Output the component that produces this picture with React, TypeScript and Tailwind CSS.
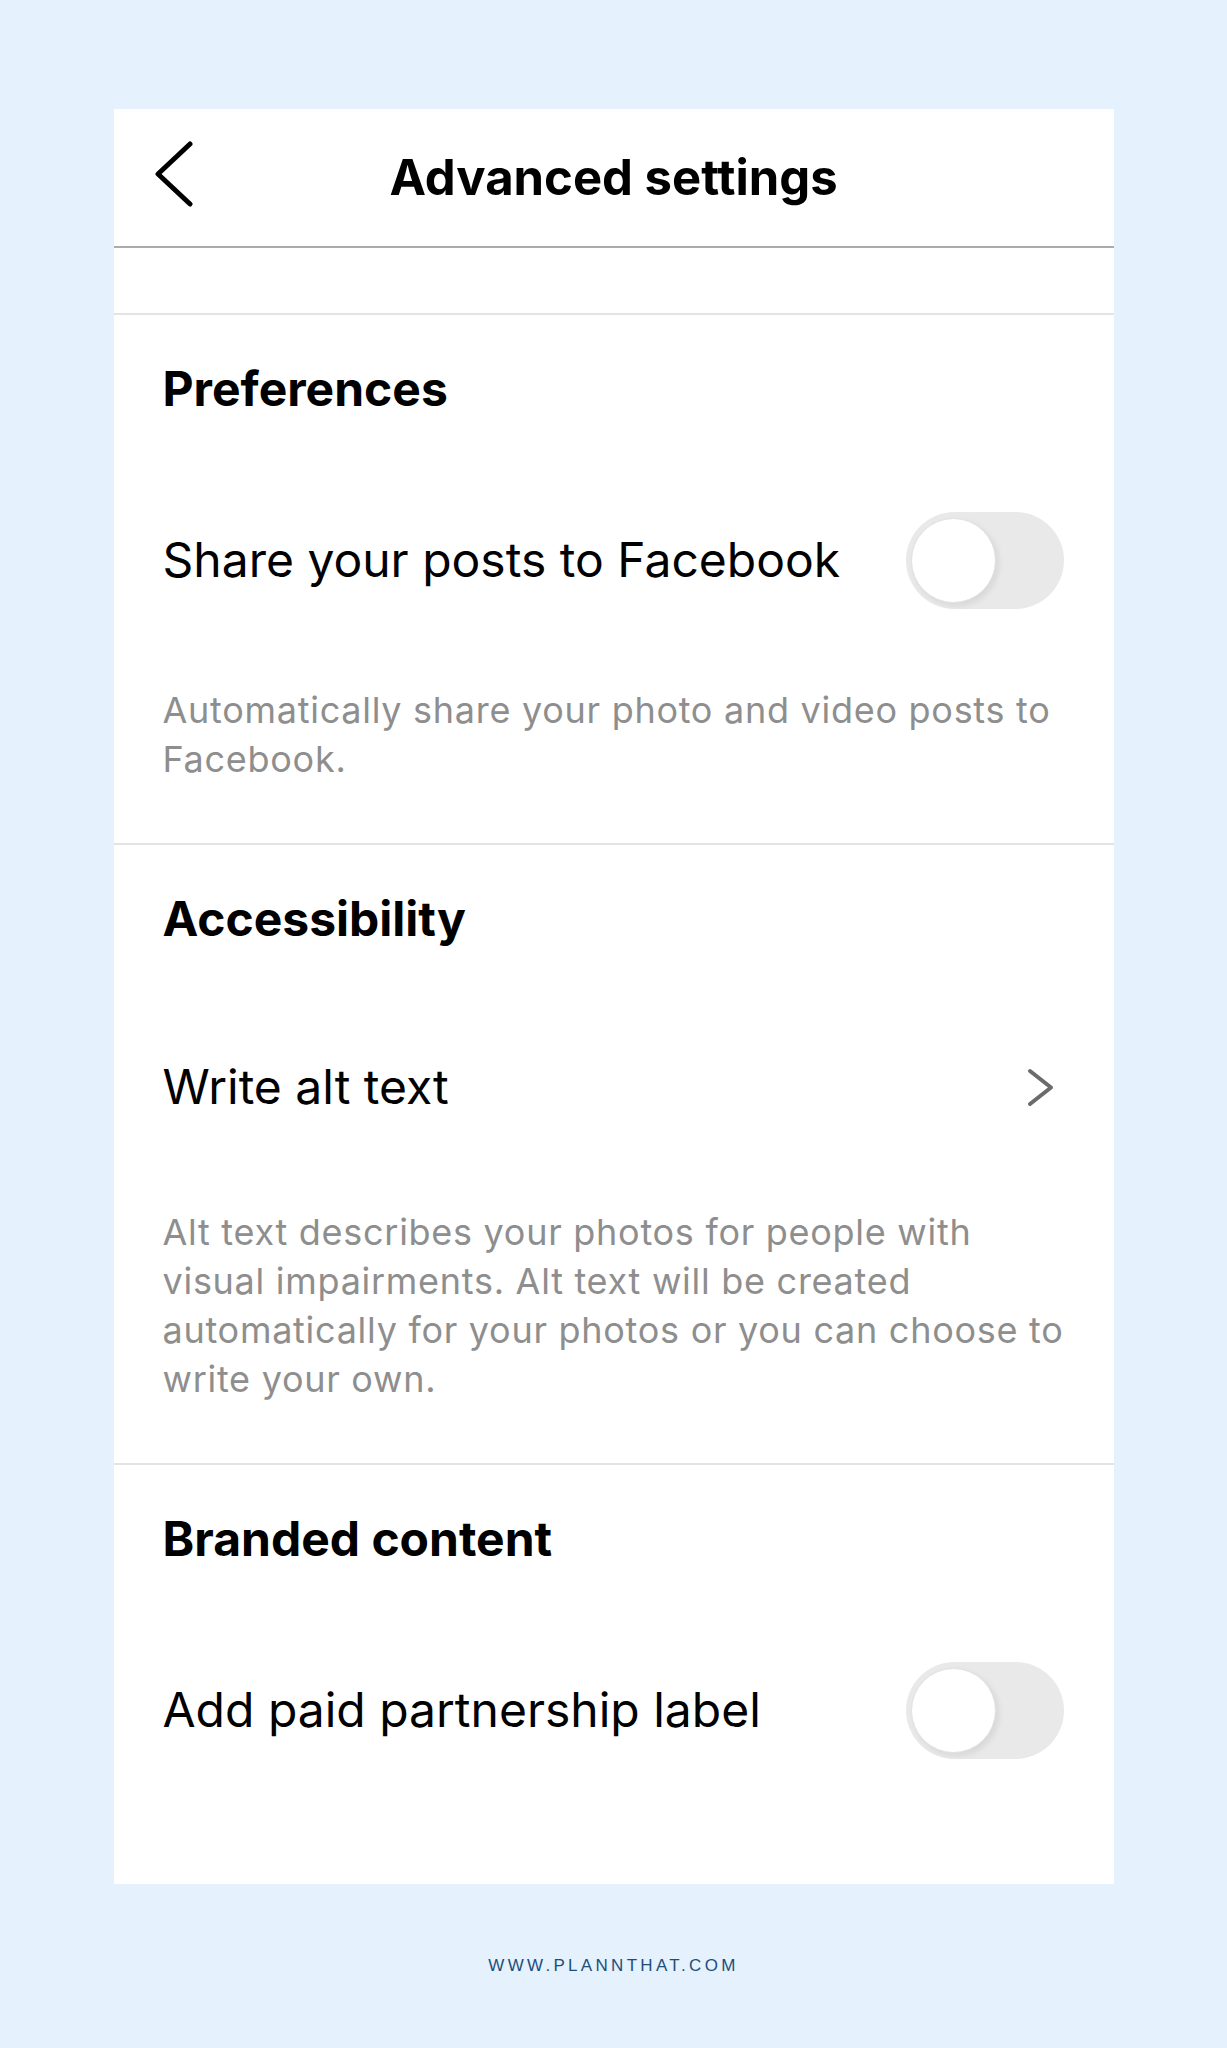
import React from 'react';

const font = { fontFamily: 'Inter, "Noto Sans", sans-serif' };

function Toggle() {
  return (
    <div className="flex h-[97px] w-[158px] shrink-0 items-center rounded-full bg-[#e9e9ea] px-[5px]">
      <div className="h-[85px] w-[85px] rounded-full border border-[#e2e2e2] bg-white shadow-[3px_3px_6px_rgba(0,0,0,0.08)]" />
    </div>
  );
}

function Chevron() {
  return (
    <svg width="30" height="40" viewBox="0 0 30 40" fill="none" className="shrink-0">
      <path d="M5 4 L26 20.5 L5 37" stroke="#6b6b6b" strokeWidth="4" strokeLinecap="round" strokeLinejoin="round" />
    </svg>
  );
}

function SectionTitle({ children }: { children: React.ReactNode }) {
  return <h2 className="text-[48px] font-bold leading-[56px] text-black">{children}</h2>;
}

function Description({ lines }: { lines: string[] }) {
  return (
    <p className="whitespace-nowrap text-[36px] leading-[49px] tracking-[0.02em] text-[#8e8e8e]">
      {lines.map((line, i) => (
        <React.Fragment key={i}>
          {line}
          {i < lines.length - 1 && <br />}
        </React.Fragment>
      ))}
    </p>
  );
}

export default function App() {
  return (
    <div className="min-h-[2048px] bg-[#e5f1fc] pt-[109px]" style={font}>
      <div className="mx-auto w-[1000px] bg-white">
        {/* Header */}
        <div className="grid h-[139px] grid-cols-[1fr_auto_1fr] border-b-2 border-[#ababab]">
          <div className="self-start pl-[37px] pt-[32px]">
            <svg width="44" height="66" viewBox="0 0 44 66" fill="none">
              <path d="M39 3 L7 33 L39 63" stroke="#000" strokeWidth="5" strokeLinecap="round" strokeLinejoin="round" />
            </svg>
          </div>
          <h1 className="self-center text-[49px] font-bold leading-[60px] text-black">Advanced settings</h1>
          <div />
        </div>
        <div className="h-[65px]" />

        {/* Preferences */}
        <section className="border-t-2 border-[#e3e3e3] pb-[59px] pl-[49px] pr-[50px] pt-[46px]">
          <SectionTitle>Preferences</SectionTitle>
          <div className="mt-[94px] flex h-[98px] items-center justify-between">
            <span className="text-[48px] leading-[56px] text-black">Share your posts to Facebook</span>
            <Toggle />
          </div>
          <div className="mt-[77px]">
            <Description lines={['Automatically share your photo and video posts to', 'Facebook.']} />
          </div>
        </section>

        {/* Accessibility */}
        <section className="border-t-2 border-[#e3e3e3] pb-[59px] pl-[49px] pr-[50px] pt-[46px]">
          <SectionTitle>Accessibility</SectionTitle>
          <div className="mt-[91px] flex h-[98px] items-center justify-between pr-[9px]">
            <span className="text-[48px] leading-[56px] text-black">Write alt text</span>
            <Chevron />
          </div>
          <div className="mt-[72px]">
            <Description
              lines={[
                'Alt text describes your photos for people with',
                'visual impairments. Alt text will be created',
                'automatically for your photos or you can choose to',
                'write your own.',
              ]}
            />
          </div>
        </section>

        {/* Branded content */}
        <section className="border-t-2 border-[#e3e3e3] pb-[125px] pl-[49px] pr-[50px] pt-[46px]">
          <SectionTitle>Branded content</SectionTitle>
          <div className="mt-[94px] flex h-[98px] items-center justify-between">
            <span className="text-[48px] leading-[56px] text-black">Add paid partnership label</span>
            <Toggle />
          </div>
        </section>
      </div>

      <p
        className="mt-[70px] text-center text-[17px] leading-[24px] tracking-[3.3px] text-[#1d4e7a]"
        style={{ fontFamily: '"Liberation Sans", Arial, sans-serif' }}
      >
        WWW.PLANNTHAT.COM
      </p>
    </div>
  );
}
